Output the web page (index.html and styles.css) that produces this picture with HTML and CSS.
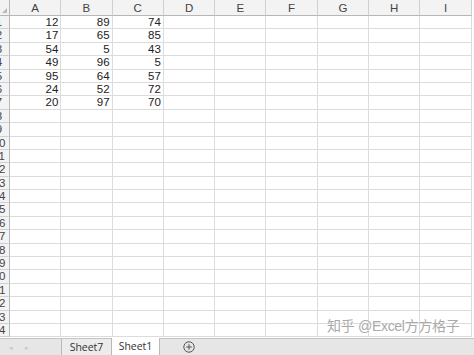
FILE: index.html
```html
<!DOCTYPE html>
<html lang="en">
<head>
    <meta charset="UTF-8">
    <meta name="viewport" content="width=device-width, initial-scale=1.0">
    <title>Sheet1 - Excel</title>
    <link rel="stylesheet" href="styles.css">
</head>
<body>
    <div class="window">
        <div class="sheet" id="sheet">
            <!-- Cells are rendered here by JS -->
        </div>
        <div class="tabbar">
            <div class="tab-nav">
                <span class="nav-arrow">&#9666;</span>
                <span class="nav-arrow">&#9656;</span>
            </div>
            <div class="tab">Sheet7</div>
            <div class="tab active">Sheet1</div>
            <div class="tab add">
                <svg width="12" height="12" viewBox="0 0 12 12">
                    <circle cx="6" cy="6" r="5.2" fill="none" stroke="#555" stroke-width="1"/>
                    <path d="M6 3.2v5.6M3.2 6h5.6" stroke="#555" stroke-width="1"/>
                </svg>
            </div>
            <div class="tab-rest"></div>
        </div>
        <div class="watermark">知乎 @Excel方方格子</div>
    </div>
    <script>
        const columns = ['A', 'B', 'C', 'D', 'E', 'F', 'G', 'H', 'I'];
        const data = [
            [12, 89, 74],
            [17, 65, 85],
            [54, 5, 43],
            [49, 96, 5],
            [95, 64, 57],
            [24, 52, 72],
            [20, 97, 70],
        ];
        const rowCount = 24;

        function renderSheet() {
            const sheet = document.getElementById('sheet');
            let html = '<div class="corner"><span class="corner-mark"></span></div>';
            columns.forEach(c => {
                html += `<div class="col-head">${c}</div>`;
            });
            for (let r = 1; r <= rowCount; r++) {
                html += `<div class="row-head"><span>${r}</span></div>`;
                const values = data[r - 1] || [];
                columns.forEach((c, i) => {
                    const v = values[i] !== undefined ? values[i] : '';
                    html += `<div class="cell">${v}</div>`;
                });
            }
            sheet.innerHTML = html;
        }

        renderSheet();
    </script>
</body>
</html>
```

FILE: styles.css
```css
body {
    margin: 0;
    padding: 0;
    background: #fff;
    font-family: 'Liberation Sans', Arial, sans-serif;
}
.window {
    position: relative;
    width: 474px;
    height: 355px;
    overflow: hidden;
    display: flex;
    flex-direction: column;
}
.sheet {
    flex: 1;
    overflow: hidden;
    display: grid;
    grid-template-columns: 10px repeat(9, 51.3px);
    grid-template-rows: 16px;
    grid-auto-rows: 13.4px;
    align-content: start;
}
.sheet > div {
    box-sizing: border-box;
    border-right: 1px solid #dcdcdc;
    border-bottom: 1px solid #dcdcdc;
}
.corner {
    background: #f2f2f2;
    border-right-color: #b7b7b7 !important;
    border-bottom-color: #b7b7b7 !important;
    position: relative;
}
.corner-mark {
    position: absolute;
    right: 2px;
    bottom: 2px;
    width: 0;
    height: 0;
    border-left: 5px solid transparent;
    border-bottom: 5px solid #b9b9b9;
}
.col-head {
    background: #f3f3f3;
    border-bottom-color: #b7b7b7 !important;
    border-right-color: #d0d0d0 !important;
    color: #444;
    font-size: 11.5px;
    text-align: center;
    line-height: 16px;
}
.row-head {
    background: #f3f3f3;
    border-right-color: #b7b7b7 !important;
    border-bottom-color: #d0d0d0 !important;
    display: flex;
    justify-content: flex-end;
    overflow: hidden;
    color: #444;
    font-size: 11.5px;
    line-height: 13px;
}
.row-head span {
    flex-shrink: 0;
    width: 20px;
    text-align: center;
}
.cell {
    color: #222;
    font-size: 11.5px;
    line-height: 13px;
    text-align: right;
    padding-right: 2px;
}
.tabbar {
    height: 17px;
    flex-shrink: 0;
    display: flex;
    background: #e6e6e6;
    border-top: 1px solid #c4c4c4;
    box-sizing: border-box;
    font-family: 'Open Sans', 'Noto Sans', sans-serif;
    font-size: 10.5px;
    color: #333;
}
.tab-nav {
    box-sizing: border-box;
    width: 61px;
    display: flex;
    gap: 12px;
    padding-left: 9px;
    align-items: center;
    color: #c8c8c8;
    font-size: 7px;
}
.tab {
    box-sizing: border-box;
    display: flex;
    align-items: center;
    justify-content: center;
    border-left: 1px solid #b9b9b9;
    line-height: 1;
}
.tab:nth-child(2) {
    width: 50px;
    background: #ececec;
}
.tab.active {
    width: 48px;
    background: #fff;
    margin-top: -1px;
    color: #333;
}
.tab.add {
    width: 59px;
    border-left-color: #b9b9b9;
}
.tab-rest {
    flex: 1;
}
.watermark {
    position: absolute;
    left: 327px;
    top: 315px;
    font-family: 'Liberation Sans', 'Noto Sans CJK SC', sans-serif;
    font-size: 14px;
    letter-spacing: -0.3px;
    color: #a9a9a9;
    text-shadow: 0 0 1px #fff, 0 0 1px #fff;
}
```
